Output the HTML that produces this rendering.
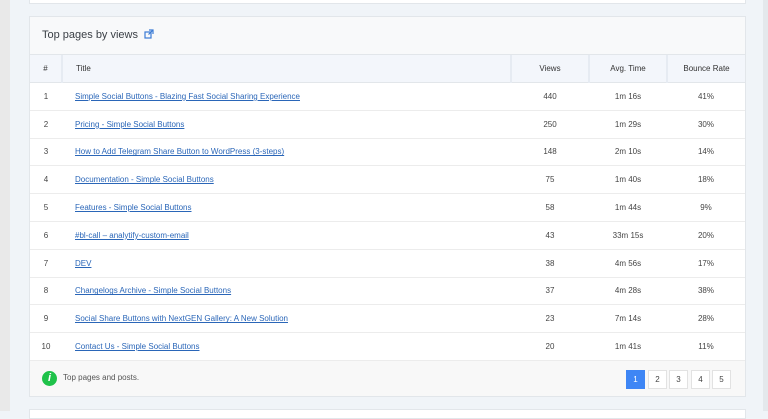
<!DOCTYPE html>
<html><head><style>
*{margin:0;padding:0;box-sizing:border-box}
body{width:768px;height:411px;overflow:hidden;background:#f0f4f8;font-family:"Liberation Sans",sans-serif;position:relative}
.lstrip{position:absolute;left:0;top:0;width:10px;height:411px;background:#e9e9e9}
.rstrip{position:absolute;left:763px;top:0;width:5px;height:411px;background:#e4e8ec}
.topcard{position:absolute;left:29px;top:-5px;width:717px;height:9px;background:#fff;border:1px solid #e2e6ea}
.botcard{position:absolute;left:29px;top:409px;width:717px;height:10px;background:#fff;border:1px solid #e2e6ea}
.card{position:absolute;left:29px;top:16px;width:717px;height:381px;background:#fff;border:1px solid #e2e6ea;overflow:hidden}
.hd{height:38px;background:#f8f9fa;border-bottom:1px solid #e2e6ea;padding-left:12px;font-size:11px;color:#3a3f45;line-height:37px}
table{border-collapse:collapse;width:100%;font-size:8px;color:#444}
th{height:27.5px;background:#f3f6fb;font-weight:normal;color:#333;border-right:2px solid #e6ebf2;border-bottom:1px solid #e2e6ea}
th:last-child{border-right:none}
td{height:27.8px;border-bottom:1px solid #ececec}
td.c{text-align:center}
a{color:#2a66b8;text-decoration:underline}
.ft{height:40px;background:#f8f8f8;position:relative}
.ic{position:absolute;left:12px;top:10px;width:15px;height:15px;border-radius:50%;background:#1fc24a;color:#fff;font-size:11px;font-weight:bold;font-style:italic;text-align:center;line-height:15px}
.ftx{position:absolute;left:33px;top:12px;font-size:8px;color:#555}
.pg{position:absolute;top:9px;width:19px;height:19px;border:1px solid #e2e2e2;background:#fff;font-size:8px;color:#444;text-align:center;line-height:17px}
.pg.a{background:#3e86f5;color:#fff;border-color:#3e86f5}
</style></head><body>
<div class="lstrip"></div><div class="rstrip"></div>
<div class="topcard"></div>
<div class="card">
<div class="hd">Top pages by views <svg width="10" height="10" viewBox="0 0 10 10" style="vertical-align:-1px;margin-left:3px"><rect x="1" y="3" width="6" height="6" fill="none" stroke="#3a7bd5" stroke-width="1.2"/><path d="M5 1h4v4M9 1L4.5 5.5" fill="none" stroke="#3a7bd5" stroke-width="1.2"/></svg></div>
<table>
<tr><th style="width:32px">#</th><th style="text-align:left;padding-left:13px">Title</th><th style="width:78px">Views</th><th style="width:78px">Avg. Time</th><th style="width:78px">Bounce Rate</th></tr>
<tr><td class="c">1</td><td style="padding-left:13px"><a>Simple Social Buttons - Blazing Fast Social Sharing Experience</a></td><td class="c">440</td><td class="c">1m 16s</td><td class="c">41%</td></tr>
<tr><td class="c">2</td><td style="padding-left:13px"><a>Pricing - Simple Social Buttons</a></td><td class="c">250</td><td class="c">1m 29s</td><td class="c">30%</td></tr>
<tr><td class="c">3</td><td style="padding-left:13px"><a>How to Add Telegram Share Button to WordPress (3-steps)</a></td><td class="c">148</td><td class="c">2m 10s</td><td class="c">14%</td></tr>
<tr><td class="c">4</td><td style="padding-left:13px"><a>Documentation - Simple Social Buttons</a></td><td class="c">75</td><td class="c">1m 40s</td><td class="c">18%</td></tr>
<tr><td class="c">5</td><td style="padding-left:13px"><a>Features - Simple Social Buttons</a></td><td class="c">58</td><td class="c">1m 44s</td><td class="c">9%</td></tr>
<tr><td class="c">6</td><td style="padding-left:13px"><a>#bl-call – analytify-custom-email</a></td><td class="c">43</td><td class="c">33m 15s</td><td class="c">20%</td></tr>
<tr><td class="c">7</td><td style="padding-left:13px"><a>DEV</a></td><td class="c">38</td><td class="c">4m 56s</td><td class="c">17%</td></tr>
<tr><td class="c">8</td><td style="padding-left:13px"><a>Changelogs Archive - Simple Social Buttons</a></td><td class="c">37</td><td class="c">4m 28s</td><td class="c">38%</td></tr>
<tr><td class="c">9</td><td style="padding-left:13px"><a>Social Share Buttons with NextGEN Gallery: A New Solution</a></td><td class="c">23</td><td class="c">7m 14s</td><td class="c">28%</td></tr>
<tr><td class="c">10</td><td style="padding-left:13px"><a>Contact Us - Simple Social Buttons</a></td><td class="c">20</td><td class="c">1m 41s</td><td class="c">11%</td></tr>
</table>
<div class="ft"><div class="ic">i</div><div class="ftx">Top pages and posts.</div>
<div class="pg a" style="left:596px">1</div><div class="pg" style="left:618px">2</div><div class="pg" style="left:639px">3</div><div class="pg" style="left:661px">4</div><div class="pg" style="left:682px">5</div></div>
</div>
<div class="botcard"></div>
</body></html>
